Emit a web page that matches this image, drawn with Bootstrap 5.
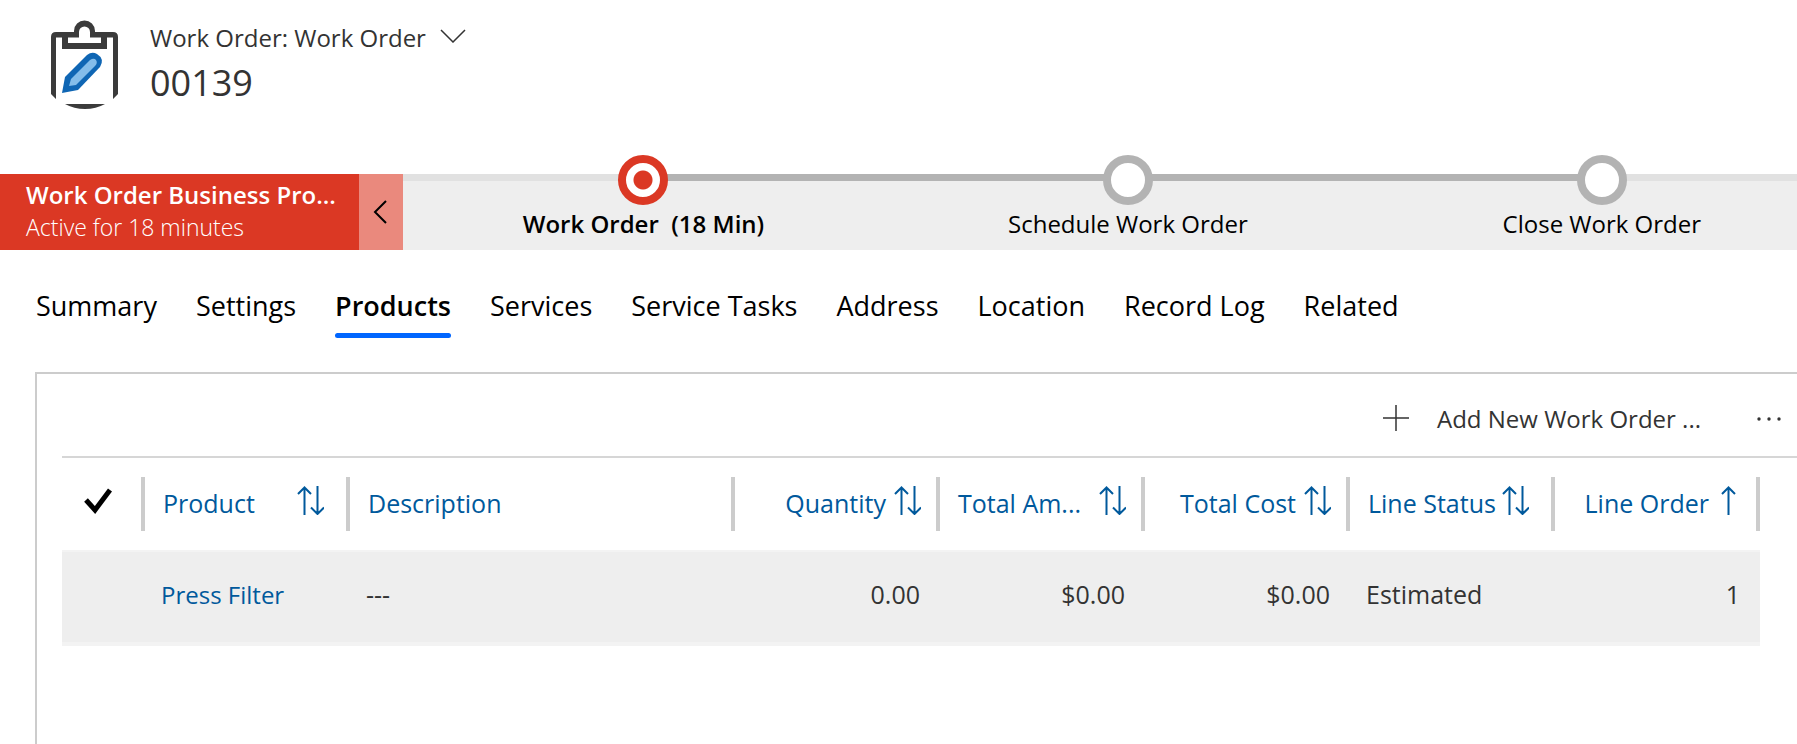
<!DOCTYPE html>
<html lang="en">
<head>
<meta charset="utf-8">
<meta name="viewport" content="width=device-width, initial-scale=1">
<title>Work Order 00139</title>
<link href="https://cdn.jsdelivr.net/npm/bootstrap@5.3.0/dist/css/bootstrap.min.css" rel="stylesheet">
<style>
  body { font-family: "Open Sans", "Noto Sans", sans-serif; font-size: 24px; line-height: 32px; color: #333; background: #fff; overflow-x: hidden; }
  a { color: #00599c; text-decoration: none; }
  button { color: inherit; }
  .record-header { padding: 20px 50px 0; gap: 30px; height: 174px; }
  .record-type { gap: 14px; line-height: 36px; }
  .record-type svg { margin-bottom: 4px; }
  .record-name { font-size: 36px; line-height: 48px; margin: 3px 0 0; font-weight: 400; }

  .process { height: 76px; background: #eee; color: #000; overflow-x: clip; }
  .process-name { width: 359px; padding: 4px 26px; background: #db3824; color: #fff; line-height: 33px; font-size: 23px; }
  .process-title { font-size: 24px; line-height: 33px; font-weight: 600; margin: 0; }
  .process-toggle { width: 44px; padding: 0 2px 0 0; background: #ea897d; color: #000; }
  .stages { min-width: 0; }
  .stage { position: relative; flex: 0 0 34.5%; padding: 0 0 10px; border: 0; background: none; font-size: 24px; display: flex; align-items: flex-end; justify-content: center; white-space: nowrap; }
  .stage-mid { flex-basis: 35%; }
  .stage-last { flex-basis: 33%; }
  .stage::before, .stage::after { content: ""; position: absolute; top: 0; height: 7px; width: 50%; background: #b3b3b3; }
  .stage::before { left: 0; }
  .stage::after { right: 0; }
  .stage-first::before, .stage-last::after { background: #e1e1e1; }
  .stage-dot { position: absolute; z-index: 1; left: 50%; top: -19px; width: 50px; height: 50px; margin-left: -25px; border: 8px solid #b3b3b3; border-radius: 50%; background: #fff; }
  .stage-current { font-weight: 600; }
  .stage-current .stage-dot { border-color: #db3824; background: radial-gradient(circle, #db3824 9px, #fff 10px); }

  .form-tabs { padding: 36px 36px 0; gap: 39px; font-size: 27px; }
  .form-tabs a { color: #000; padding-bottom: 8px; line-height: 40px; border-bottom: 5px solid transparent; position: relative; }
  .form-tabs a.active { font-weight: 600; }
  .form-tabs a.active::after { content: ""; position: absolute; left: 0; right: 0; bottom: -4px; height: 5px; border-radius: 3px; background: #06f; }

  .grid-panel { margin: 33px 0 0 35px; padding-left: 25px; border: solid #ccc; border-width: 2px 0 0 2px; min-height: 372px; }
  .command-bar { height: 84px; padding: 8px 16px 0 0; border-bottom: 2px solid #d6d6d6; }
  .add-command { gap: 28px; margin-right: 56px; }
  .add-command svg { margin-bottom: 3px; }
  .lines { table-layout: fixed; width: calc(100% - 37px); margin: 0; border-collapse: separate; border-spacing: 0; font-size: 25px; }
  .lines th { height: 92px; padding: 0; border: 0; font-weight: 400; color: #00599c; vertical-align: middle; }
  .head-cell { width: 100%; height: 54px; padding: 0 22px 3px 18px; border: 0; border-right: 4px solid #ccc; border-radius: 0; background: none; }
  .head-cell svg { margin-bottom: 4px; }
  .head-end { justify-content: flex-end; padding-right: 15px; gap: 8px; }
  .head-last { gap: 12px; padding-right: 20px; }
  .lines td { height: 96px; padding: 0 20px 6px 16px; border: solid #f3f3f3; border-width: 2px 0 4px; background: #eee; color: #333; vertical-align: middle; }
  .lines td a { font-size: 24px; }
  .col-check { width: 83px; }
  .col-std { width: 205px; }
  svg { flex: none; display: block; }
</style>
</head>
<body>
<svg class="d-none" aria-hidden="true">
  <symbol id="sort" viewBox="0 0 27 29"><path d="M7.500 29V1M1 8l6.500-6.500L14 8M20.500 0v28M14 21.500l6.500 6.500 6.500-6.500" fill="none" stroke="#00599c" stroke-width="2"/></symbol>
</svg>

<header class="record-header d-flex align-items-start">
  <svg width="70" height="90" viewBox="0 0 70 90" role="img" aria-label="Work order">
    <path d="M1 74V17q0-5 5-5h18v-1a10.500 10.500 0 0 1 21 0v1h18q5 0 5 5v57l-5 5V17.500H57V29H12V17.500H6V79z" fill="#3b3b3b"/>
    <path d="M18 17.500H29V12a5.500 5.500 0 0 1 11 0v5.500H51V23H18z" fill="#fff"/>
    <path d="M15 84h40q-9 5-20 5t-20-5z" fill="#3b3b3b"/>
    <path d="M12 73l3-16L37 35q5-4 10-1 8 5 3 13L28 70z" fill="#0f66b4"/>
    <path d="M19 66l2-7 19-19q4-2.500 6 0 2 3-1 6L26 65z" fill="#84bdea"/>
  </svg>
  <div>
    <button type="button" class="record-type d-flex align-items-center border-0 bg-transparent p-0">
      Work Order: Work Order
      <svg width="26" height="14" viewBox="0 0 26 14" aria-hidden="true"><path d="M1 1l12 12L25 1" fill="none" stroke="#333" stroke-width="1.500"/></svg>
    </button>
    <h1 class="record-name">00139</h1>
  </div>
</header>

<section class="process d-flex" aria-label="Business process">
  <div class="process-name flex-shrink-0 text-nowrap">
    <h2 class="process-title">Work Order Business Pro...</h2>
    <div class="fw-light">Active for 18 minutes</div>
  </div>
  <button type="button" class="process-toggle flex-shrink-0 d-flex align-items-center justify-content-center border-0" aria-label="Collapse">
    <svg width="14" height="26" viewBox="0 0 14 26" aria-hidden="true"><path d="M13 2L2 13l11 11" fill="none" stroke="#000" stroke-width="2"/></svg>
  </button>
  <div class="stages d-flex flex-grow-1">
    <button type="button" class="stage stage-first stage-current"><span class="stage-dot"></span>Work Order &nbsp;(18 Min)</button>
    <button type="button" class="stage stage-mid"><span class="stage-dot"></span>Schedule Work Order</button>
    <button type="button" class="stage stage-last"><span class="stage-dot"></span>Close Work Order</button>
  </div>
</section>

<nav class="form-tabs d-flex text-nowrap" aria-label="Form tabs">
  <a href="#">Summary</a>
  <a href="#">Settings</a>
  <a href="#" class="active" aria-current="page">Products</a>
  <a href="#">Services</a>
  <a href="#">Service Tasks</a>
  <a href="#">Address</a>
  <a href="#">Location</a>
  <a href="#">Record Log</a>
  <a href="#">Related</a>
</nav>

<main class="grid-panel">
  <div class="command-bar d-flex align-items-center justify-content-end">
    <button type="button" class="add-command d-flex align-items-center border-0 bg-transparent p-0">
      <svg width="26" height="26" viewBox="0 0 26 26" aria-hidden="true"><path d="M13 0v26M0 13h26" stroke="#333" stroke-width="1.500"/></svg>
      Add New Work Order ...
    </button>
    <button type="button" class="border-0 bg-transparent p-0" aria-label="More commands">
      <svg width="24" height="4" viewBox="0 0 24 4" aria-hidden="true"><g fill="#333"><circle cx="2" cy="2" r="1.700"/><circle cx="12" cy="2" r="1.700"/><circle cx="22" cy="2" r="1.700"/></g></svg>
    </button>
  </div>

  <table class="lines table text-nowrap">
    <colgroup><col class="col-check"><col class="col-std"><col><col class="col-std"><col class="col-std"><col class="col-std"><col class="col-std"><col class="col-std"></colgroup>
    <thead>
      <tr>
        <th scope="col"><button type="button" class="head-cell d-flex align-items-center" aria-label="Select all">
          <svg width="34" height="26" viewBox="0 0 34 26" aria-hidden="true"><path d="M6 12l9 10L30 2" fill="none" stroke="#000" stroke-width="5"/></svg></button></th>
        <th scope="col"><button type="button" class="head-cell d-flex align-items-center justify-content-between">Product <svg width="27" height="29"><use href="#sort"/></svg></button></th>
        <th scope="col"><button type="button" class="head-cell d-flex align-items-center">Description</button></th>
        <th scope="col"><button type="button" class="head-cell head-end d-flex align-items-center">Quantity <svg width="27" height="29"><use href="#sort"/></svg></button></th>
        <th scope="col"><button type="button" class="head-cell head-end d-flex align-items-center justify-content-between">Total Am... <svg width="27" height="29"><use href="#sort"/></svg></button></th>
        <th scope="col"><button type="button" class="head-cell head-end d-flex align-items-center">Total Cost <svg width="27" height="29"><use href="#sort"/></svg></button></th>
        <th scope="col"><button type="button" class="head-cell d-flex align-items-center justify-content-between">Line Status <svg width="27" height="29"><use href="#sort"/></svg></button></th>
        <th scope="col" aria-sort="ascending"><button type="button" class="head-cell head-end head-last d-flex align-items-center">Line Order <svg width="15" height="29" viewBox="0 0 15 29"><path d="M7.500 29V1M1 8l6.500-6.500L14 8" fill="none" stroke="#00599c" stroke-width="2"/></svg></button></th>
      </tr>
    </thead>
    <tbody>
      <tr>
        <td></td>
        <td><a href="#">Press Filter</a></td>
        <td>---</td>
        <td class="text-end">0.00</td>
        <td class="text-end">$0.00</td>
        <td class="text-end">$0.00</td>
        <td>Estimated</td>
        <td class="text-end">1</td>
      </tr>
    </tbody>
  </table>
</main>
<script src="https://cdn.jsdelivr.net/npm/bootstrap@5.3.0/dist/js/bootstrap.bundle.min.js"></script>
</body>
</html>
